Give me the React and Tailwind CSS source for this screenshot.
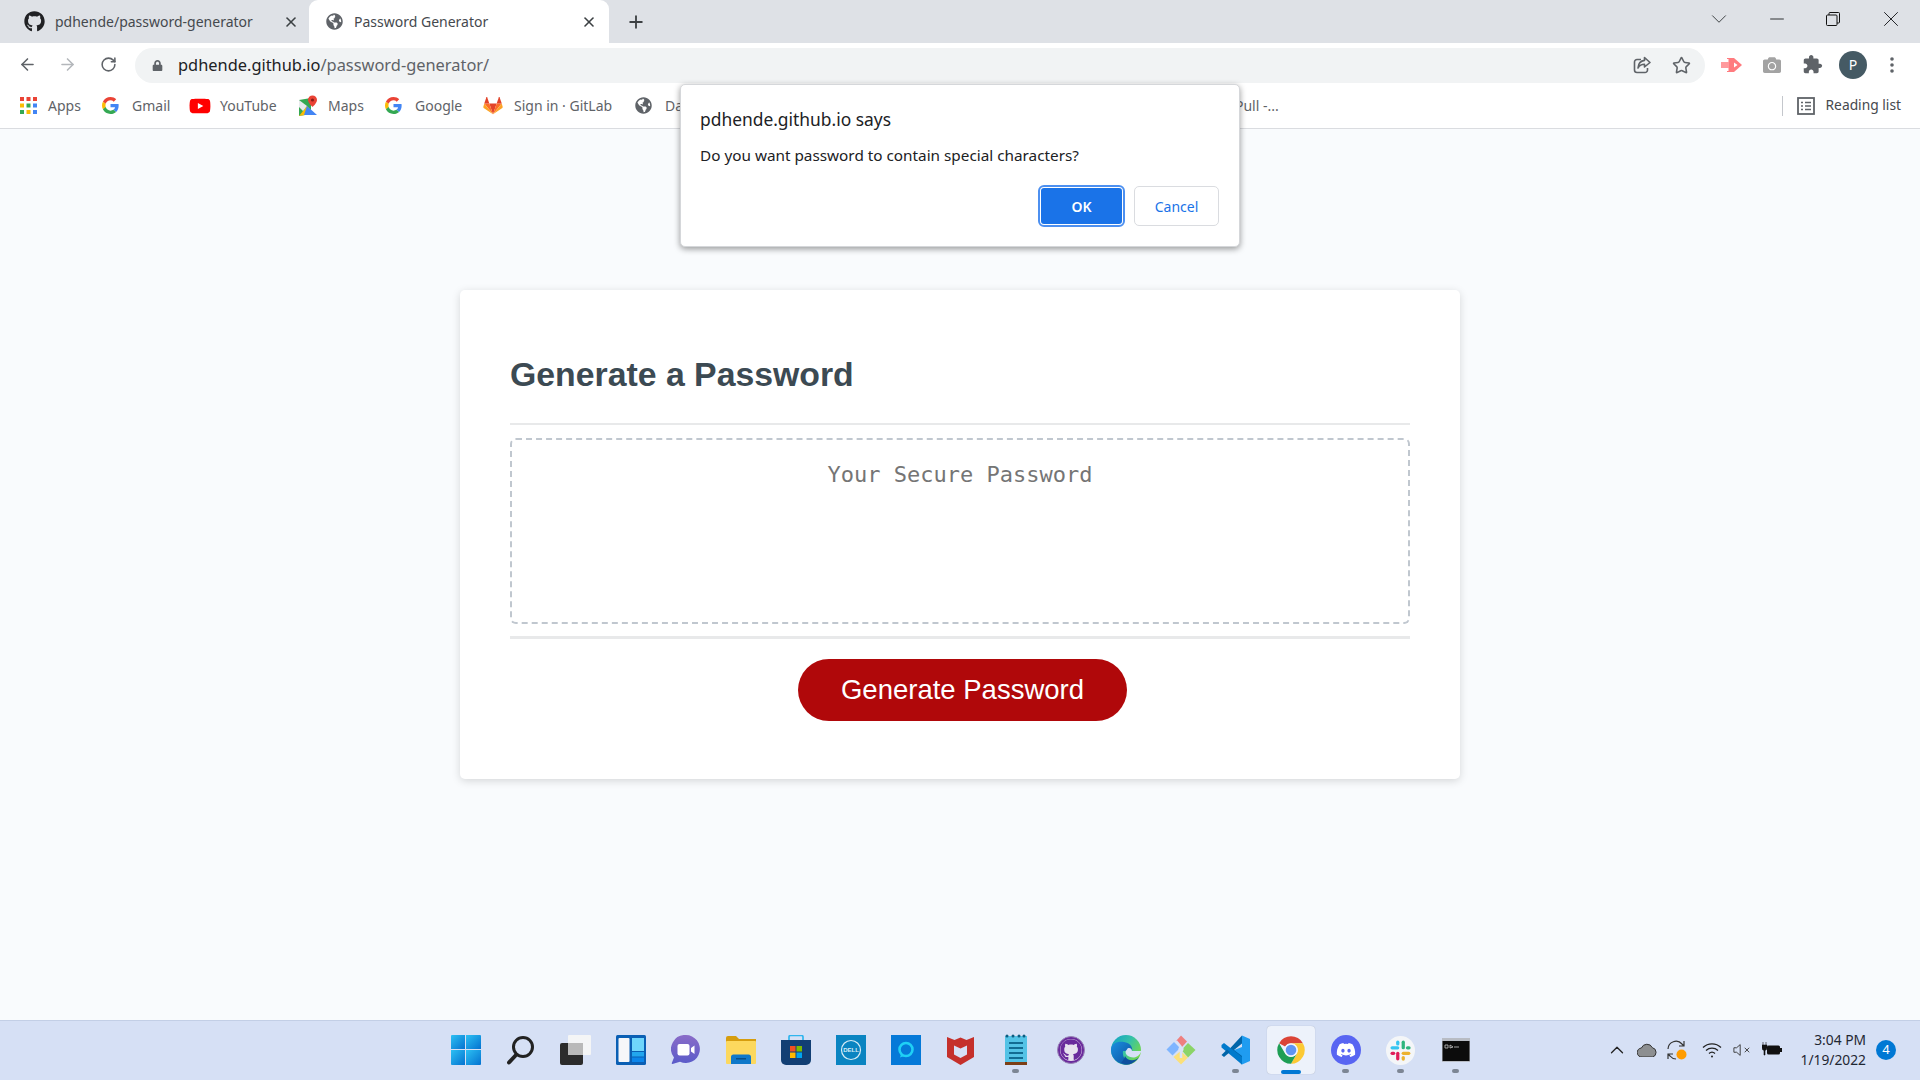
import React from "react";
import { ArrowLeft, ArrowRight, RotateCw, Star, Plus, X, Minus, ChevronDown, ChevronUp } from "lucide-react";
import { FaGithub, FaGlobeAmericas, FaLock, FaCamera, FaDiscord, FaYoutube } from "react-icons/fa";

const ui = "font-['Noto_Sans',sans-serif]";

function GoogleG() {
  return (
    <svg width="17" height="17" viewBox="0 0 48 48">
      <path fill="#EA4335" d="M24 9.5c3.54 0 6.71 1.22 9.21 3.6l6.85-6.85C35.9 2.38 30.47 0 24 0 14.62 0 6.51 5.38 2.56 13.22l7.98 6.19C12.43 13.72 17.74 9.5 24 9.5z" />
      <path fill="#4285F4" d="M46.98 24.55c0-1.57-.15-3.09-.38-4.55H24v9.02h12.94c-.58 2.96-2.26 5.48-4.78 7.18l7.73 6c4.51-4.18 7.09-10.36 7.09-17.65z" />
      <path fill="#FBBC05" d="M10.53 28.59c-.48-1.45-.76-2.99-.76-4.59s.27-3.14.76-4.59l-7.98-6.19C.92 16.46 0 20.12 0 24c0 3.88.92 7.54 2.56 10.78l7.97-6.19z" />
      <path fill="#34A853" d="M24 48c6.48 0 11.93-2.13 15.89-5.81l-7.73-6c-2.15 1.45-4.92 2.3-8.16 2.3-6.26 0-11.57-4.22-13.47-9.91l-7.98 6.19C6.51 42.62 14.62 48 24 48z" />
    </svg>
  );
}

function AppsGrid() {
  const c = ["#ea4335", "#ea4335", "#ea4335", "#fbbc05", "#34a853", "#4285f4", "#34a853", "#fbbc05", "#4285f4"];
  return (
    <svg width="17" height="17" viewBox="0 0 17 17">
      {c.map((f, i) => (
        <rect key={i} x={(i % 3) * 6.5} y={Math.floor(i / 3) * 6.5} width="4" height="4" fill={f} />
      ))}
    </svg>
  );
}

function MapsIcon() {
  return (
    <svg width="20" height="22" viewBox="0 0 20 22">
      <path d="M1 5 L13 3 V19 L1 21Z" fill="#34a853" />
      <path d="M1 21 L9 11 L13 15 V19Z" fill="#fbbc05" />
      <path d="M1 5 L9 11 L5 16 L1 12Z" fill="#e8eaed" />
      <path d="M9 11 L19 20 H6Z" fill="#4285f4" />
      <path d="M14.5 0.5a4.5 4.5 0 0 1 4.5 4.5c0 3-4.5 7-4.5 7S10 8 10 5a4.5 4.5 0 0 1 4.5-4.5z" fill="#ea4335" />
      <circle cx="14.5" cy="5" r="1.6" fill="#8c1d18" />
    </svg>
  );
}

function GitLabIcon() {
  return (
    <svg width="20" height="20" viewBox="0 0 24 24">
      <path d="M12 22 L7.6 9 H16.4Z" fill="#e24329" />
      <path d="M12 22 L7.6 9 H1.5Z" fill="#fc6d26" />
      <path d="M12 22 L16.4 9 H22.5Z" fill="#fc6d26" />
      <path d="M1.5 9 L0.4 13 c-.2.5 0 1 .4 1.3 L12 22Z" fill="#fca326" />
      <path d="M22.5 9 L23.6 13 c.2.5 0 1-.4 1.3 L12 22Z" fill="#fca326" />
      <path d="M1.5 9 H7.6 L5 1.5 c-.2-.4-.7-.4-.9 0Z" fill="#e24329" />
      <path d="M22.5 9 H16.4 L19 1.5 c.2-.4.7-.4.9 0Z" fill="#e24329" />
    </svg>
  );
}

function Bookmark({ width, icon, label, gap }) {
  return (
    <div className="flex items-center shrink-0" style={{ width }}>
      <div className="flex items-center justify-start shrink-0" style={{ width: gap }}>{icon}</div>
      <span className="text-[14px] text-[#5f6368] whitespace-nowrap">{label}</span>
    </div>
  );
}

function Share() {
  return (
    <svg width="20" height="20" viewBox="0 0 20 20" fill="none" stroke="#5f6368" strokeWidth="1.6">
      <path d="M9 4.5H5a2.5 2.5 0 0 0-2.5 2.5v8A2.5 2.5 0 0 0 5 17.5h8a2.5 2.5 0 0 0 2.5-2.5v-2" />
      <path d="M12.5 2.5 L18 7.5 L12.5 12 V9.3 C9.5 9.3 7.5 10.5 6 13 C6.3 9 8.5 5.8 12.5 5.4Z" strokeLinejoin="round" />
    </svg>
  );
}

function RedExt() {
  return (
    <svg width="22" height="16" viewBox="0 0 22 16">
      <path d="M6 1 H13 L21 8 L13 15 H6Z" fill="#ff7b7f" />
      <rect x="0" y="5" width="8" height="6" fill="#ff9a9d" />
      <path d="M13 5.5 L16.5 8 L13 10.5Z" fill="#fff" />
      <rect x="6" y="2" width="1.5" height="3" fill="#fff" />
      <rect x="6" y="11" width="1.5" height="3" fill="#fff" />
    </svg>
  );
}

function ReadingList() {
  return (
    <svg width="18" height="18" viewBox="0 0 18 18" fill="none" stroke="#5f6368">
      <rect x="1" y="1" width="16" height="16" strokeWidth="1.8" />
      <path d="M4 5.5h2M8 5.5h6M4 9h2M8 9h6M4 12.5h2M8 12.5h6" strokeWidth="1.6" />
    </svg>
  );
}

function Slot({ dot, active, children }) {
  return (
    <div className="relative w-[55px] h-[48px] flex items-center justify-center shrink-0">
      {active && <div className="absolute left-[4px] top-0 w-[48px] h-[48px] rounded-[4px] bg-[#edf2fb] shadow-[0_0_1px_rgba(0,0,0,0.25)]" />}
      <div className="relative flex items-center justify-center">{children}</div>
      {dot && <div className="absolute left-[24px] bottom-[1px] w-[7px] h-[4px] rounded-full bg-[#7d8694]" />}
      {active && <div className="absolute left-[18px] bottom-0 w-[20px] h-[4px] rounded-full bg-[#0078d4]" />}
    </div>
  );
}

const IWin = () => (
  <svg width="30" height="30" viewBox="0 0 30 30">
    <defs>
      <linearGradient id="w" x1="0" y1="0" x2="1" y2="1"><stop offset="0" stopColor="#2cc0f3" /><stop offset="1" stopColor="#0472d0" /></linearGradient>
    </defs>
    <path d="M1 0h13v14H0V1a1 1 0 0 1 1-1z" fill="url(#w)" />
    <path d="M15 0h14a1 1 0 0 1 1 1v13H15z" fill="url(#w)" />
    <path d="M0 15h14v15H1a1 1 0 0 1-1-1z" fill="url(#w)" />
    <path d="M15 15h15v14a1 1 0 0 1-1 1H15z" fill="url(#w)" />
  </svg>
);
const ISearch = () => (
  <svg width="28" height="30" viewBox="0 0 28 30" fill="none">
    <circle cx="16" cy="12" r="9.5" stroke="#222" strokeWidth="3" />
    <path d="M9 20 L2 27.5" stroke="#222" strokeWidth="4" strokeLinecap="round" />
  </svg>
);
const ITask = () => (
  <svg width="32" height="30" viewBox="0 0 32 30">
    <rect x="0" y="8" width="23" height="22" rx="2" fill="#2b2b2b" />
    <rect x="8" y="0" width="23" height="20" rx="1" fill="#f5f5f5" fillOpacity="0.95" />
    <rect x="8" y="8" width="15" height="12" fill="#b9b9b9" />
  </svg>
);
const IWidgets = () => (
  <svg width="30" height="30" viewBox="0 0 30 30">
    <rect width="30" height="30" rx="1.5" fill="#0a5fb4" />
    <rect x="2.5" y="3" width="11" height="24" rx="1" fill="#f6f7f9" />
    <rect x="16" y="3" width="12" height="13" fill="#6fd6fb" />
    <rect x="16" y="17" width="12" height="4.5" fill="#22a6ee" />
    <rect x="16" y="22.5" width="12" height="4.5" fill="#0b85ea" />
  </svg>
);
const IChat = () => (
  <svg width="30" height="30" viewBox="0 0 30 30">
    <defs>
      <linearGradient id="c" x1="0" y1="0" x2="0" y2="1"><stop offset="0" stopColor="#8a6cc8" /><stop offset="1" stopColor="#5a5bc9" /></linearGradient>
    </defs>
    <path d="M15 0a14 14 0 1 1-6 26.7L1.5 29c-.8 0-1-.6-.6-1.3L3 22.5A14 14 0 0 1 15 0z" fill="url(#c)" />
    <rect x="6.5" y="9" width="12" height="11.5" rx="2" fill="#fff" />
    <path d="M20 13 L23.5 10.5 V19 L20 16.5Z" fill="#fff" />
  </svg>
);
const IFolder = () => (
  <svg width="30" height="28" viewBox="0 0 30 28">
    <path d="M0 2a2 2 0 0 1 2-2h8l3 3h-13z" fill="#d69d0e" />
    <rect x="0" y="3" width="30" height="5" fill="#d69d0e" />
    <rect x="0" y="5" width="30" height="23" rx="1" fill="#fcd85e" />
    <path d="M5 28v-7a2.5 2.5 0 0 1 2.5-2.5h15A2.5 2.5 0 0 1 25 21v7z" fill="#0f78c9" />
    <rect x="10" y="22" width="10" height="1.5" fill="#074e88" />
  </svg>
);
const IStore = () => (
  <svg width="30" height="30" viewBox="0 0 30 30">
    <path d="M8 5V2a1.5 1.5 0 0 1 1.5-1.5h11A1.5 1.5 0 0 1 22 2v3" stroke="#30b5ee" strokeWidth="1.7" fill="none" />
    <path d="M0 5h30v20a5 5 0 0 1-5 5H5a5 5 0 0 1-5-5z" fill="#123f74" />
    <rect x="9" y="11" width="5.5" height="5.5" fill="#f25022" />
    <rect x="15.5" y="11" width="5.5" height="5.5" fill="#7fba00" />
    <rect x="9" y="17.5" width="5.5" height="5.5" fill="#ffb900" />
    <rect x="15.5" y="17.5" width="5.5" height="5.5" fill="#00a4ef" />
  </svg>
);
const IDell = () => (
  <svg width="30" height="30" viewBox="0 0 30 30">
    <rect width="30" height="30" fill="#0a84c1" />
    <circle cx="15" cy="15" r="9.5" fill="none" stroke="#d8ecf6" strokeWidth="1.2" />
    <text x="15" y="17" fontSize="6" fontWeight="700" textAnchor="middle" fill="#d8ecf6" fontFamily="Liberation Sans, sans-serif">DELL</text>
  </svg>
);
const IAlexa = () => (
  <svg width="30" height="30" viewBox="0 0 30 30">
    <rect width="30" height="30" fill="#0579d8" />
    <circle cx="15" cy="14.5" r="6.5" fill="none" stroke="#1fd0f5" strokeWidth="2.6" />
    <path d="M10 19.5 L9 22.5 L13 21" fill="#1fd0f5" />
  </svg>
);
const IMcAfee = () => (
  <svg width="27" height="30" viewBox="0 0 27 30">
    <path d="M0 2 L7.5 5 L13.5 2.5 L19.5 5 L27 2 V22 L13.5 30 L0 22Z" fill="#c5302b" />
    <path d="M7 10.5 L13.5 13.5 L20 10.5 V19.5 L13.5 23 L7 19.5Z" fill="#d6e0f5" />
  </svg>
);
const INotes = () => (
  <svg width="22" height="32" viewBox="0 0 22 32">
    <rect x="0" y="2" width="22" height="26" fill="#54c3e6" />
    <rect x="0" y="28" width="22" height="3" fill="#7c3f16" />
    {[2, 8, 14, 19].map((x) => <circle key={x} cx={x} cy="2" r="1.5" fill="#0e5c80" />)}
    {[8, 13, 18, 23].map((y) => <rect key={y} x="4" y={y} width="14" height="2" fill="#136c93" />)}
  </svg>
);
const IGithub = () => (
  <div className="w-[28px] h-[28px] rounded-full bg-[#6a2a9c] border-[1px] border-[#9a86b8] flex items-center justify-center">
    <div className="w-[22px] h-[22px] rounded-full bg-[#e8e2ef] flex items-center justify-center">
      <FaGithub size={22} color="#6a2a9c" />
    </div>
  </div>
);
const IEdge = () => (
  <svg width="30" height="30" viewBox="0 0 30 30">
    <defs>
      <linearGradient id="e1" x1="0" y1="0" x2="1" y2="0.6"><stop offset="0" stopColor="#0fa0c8" /><stop offset="0.55" stopColor="#35c1a8" /><stop offset="1" stopColor="#74d84a" /></linearGradient>
      <linearGradient id="e2" x1="0" y1="0" x2="1" y2="1"><stop offset="0" stopColor="#1a8fe0" /><stop offset="1" stopColor="#0d4f9e" /></linearGradient>
    </defs>
    <circle cx="15" cy="15" r="15" fill="url(#e1)" />
    <path d="M0 15 C0 8 7 6 13 7 C19 8 22 12 21 16 H12 C11 22 15 28 21 28.5 A15 15 0 0 1 0 15z" fill="url(#e2)" />
    <path d="M30 17 C27 24 20 23 17 21 C14 19 14 16 16 14.5 C17 12 21 13 21 16 L30 16Z" fill="#d6e0f5" />
    <path d="M14 21 C16 26 24 27 28 22 C24 29 16 31 10 27.5 C12 26.5 13 24 14 21z" fill="#0d4f9e" />
  </svg>
);
const IGit = () => (
  <svg width="30" height="30" viewBox="0 0 30 30">
    <path d="M15 0.5 L21 6.5 L16 12 L10 6Z" fill="#ee7f7f" />
    <path d="M0.5 15 L8 7.5 L14 13.5 L6.5 21Z" fill="#7fb5ff" transform="translate(0 -0.5)" />
    <path d="M22 8 L29.5 15 L22 22.5 L15.5 15Z" fill="#8bd468" />
    <path d="M15 29.5 L7.5 22 L14.5 16 L22 22.5Z" fill="#fbe07a" />
    <path d="M10 6 L15 12 M15 15v8" stroke="#d9e2f6" strokeWidth="2.5" />
    <circle cx="15" cy="14" r="2.6" fill="#d9e2f6" />
  </svg>
);
const IVscode = () => (
  <svg width="30" height="30" viewBox="0 0 30 30">
    <path d="M21 0.5 L29 4 V26 L21 29.5 L8 17 L21 12Z" fill="#1f9cf0" />
    <path d="M21 0.5 L7.5 15 L21 29.5 V21 L13 15 L21 8.5Z" fill="#0065a9" />
    <path d="M0.5 10 L3 8 L21 22 V29.5 L0.5 12.5Z" fill="#007acc" />
    <path d="M0.5 20 L3 22 L9 17 L6 14.5Z" fill="#0065a9" />
  </svg>
);
const IChrome = () => (
  <svg width="30" height="30" viewBox="0 0 48 48">
    <path d="M4.95 13 A22 22 0 0 1 43.05 13 L24 13 A11 11 0 0 0 14.5 18.5Z" fill="#db4437" />
    <path d="M43.05 13 A22 22 0 0 1 24 46 L33.5 29.5 A11 11 0 0 0 33.5 18.5 A11 11 0 0 0 24 13Z" fill="#fcc934" />
    <path d="M24 46 A22 22 0 0 1 4.95 13 L14.5 29.5 A11 11 0 0 0 24 35 A11 11 0 0 0 33.5 29.5Z" fill="#1e9e55" />
    <circle cx="24" cy="24" r="10.5" fill="#f3f5fb" />
    <circle cx="24" cy="24" r="8.5" fill="#5f94f2" />
  </svg>
);
const IDiscord = () => (
  <div className="w-[30px] h-[30px] rounded-full bg-[#5865f2] flex items-center justify-center">
    <FaDiscord size={20} color="#fff" />
  </div>
);
const ISlack = () => (
  <svg width="29" height="29" viewBox="0 0 29 29">
    <circle cx="14.5" cy="14.5" r="14.5" fill="#f4f6f8" />
    <g transform="translate(14.5 14.5) scale(1.25) translate(-14.5 -14.5)">
      <rect x="6.5" y="11" width="7" height="2.6" rx="1.3" fill="#36c5f0" />
      <rect x="11" y="6.5" width="2.6" height="4" rx="1.3" fill="#36c5f0" />
      <rect x="15.4" y="6.5" width="2.6" height="7" rx="1.3" fill="#2eb67d" />
      <rect x="18.8" y="11" width="3.8" height="2.6" rx="1.3" fill="#2eb67d" />
      <rect x="15.4" y="15.4" width="7" height="2.6" rx="1.3" fill="#ecb22e" />
      <rect x="15.4" y="18.8" width="2.6" height="3.8" rx="1.3" fill="#ecb22e" />
      <rect x="11" y="15.4" width="2.6" height="7" rx="1.3" fill="#e01e5a" />
      <rect x="6.5" y="15.4" width="3.8" height="2.6" rx="1.3" fill="#e01e5a" />
    </g>
  </svg>
);
const ITerminal = () => (
  <svg width="28" height="24" viewBox="0 0 28 24">
    <rect width="28" height="24" fill="#b8bcc4" />
    <rect y="3" x="0.5" width="27" height="20" fill="#0c0c0c" />
    <path d="M3 7h3v3H3zM8 7l3 2-3 1zM12 9h5" stroke="#c8c8c8" strokeWidth="0.8" fill="none" />
  </svg>
);

function Tray({ w, children }) {
  return <div className="flex items-center justify-center shrink-0" style={{ width: w }}>{children}</div>;
}

export default function App() {
  return (
    <div className={`relative h-screen w-full flex flex-col overflow-hidden bg-[#f9fbfd] ${ui}`}>
      {/* tab strip */}
      <div className="h-[43px] shrink-0 bg-[#dee1e6] flex items-center">
        <div className="w-[309px] h-full flex items-center pl-[24px] shrink-0">
          <FaGithub size={21} color="#202124" />
          <span className="ml-[10px] text-[14px] text-[#45494e] whitespace-nowrap w-[226px]">pdhende/password-generator</span>
          <X size={16} color="#3c4043" strokeWidth={2.4} className="ml-[2px]" />
        </div>
        <div className="w-[300px] h-full bg-white rounded-t-[9px] flex items-center pl-[17px] shrink-0">
          <FaGlobeAmericas size={17} color="#5f6368" />
          <span className="ml-[11px] text-[14px] text-[#45494e] whitespace-nowrap w-[227px]">Password Generator</span>
          <X size={16} color="#3c4043" strokeWidth={2.4} />
        </div>
        <Plus size={20} color="#3c4043" strokeWidth={2.2} className="ml-[17px]" />
        <div className="ml-auto flex items-center mb-[6px]">
          <ChevronDown size={26} color="#3c4043" strokeWidth={0.9} className="mr-[34px]" />
          <Minus size={22} color="#202124" strokeWidth={1} className="mr-[38px]" />
          <svg width="14" height="14" viewBox="0 0 14 14" fill="none" stroke="#111" className="mr-[38px]">
            <rect x="0.5" y="3" width="10.5" height="10.5" rx="1" />
            <path d="M3 3V1.5a1 1 0 0 1 1-1h8.5a1 1 0 0 1 1 1V10a1 1 0 0 1-1 1H11" />
          </svg>
          <X size={26} color="#202124" strokeWidth={0.9} className="mr-[16px]" />
        </div>
      </div>

      {/* toolbar */}
      <div className="h-[43px] shrink-0 bg-white flex items-center">
        <div className="w-[135px] flex items-center pl-[18px] shrink-0">
          <ArrowLeft size={19} color="#5f6368" strokeWidth={2} />
          <ArrowRight size={19} color="#b4b7bb" strokeWidth={2} className="ml-[21px]" />
          <RotateCw size={17} color="#5f6368" strokeWidth={2.2} className="ml-[23px]" />
        </div>
        <div className="w-[1570px] h-[35px] mt-[1px] rounded-full bg-[#f1f3f4] flex items-center pl-[17px] shrink-0">
          <FaLock size={11} color="#5f6368" />
          <span className="ml-[15px] text-[16.4px] text-[#202124] whitespace-nowrap">
            pdhende.github.io<span className="text-[#5f6368]">/password-generator/</span>
          </span>
          <div className="ml-auto flex items-center">
            <Share />
            <Star size={19} color="#5f6368" strokeWidth={2} className="ml-[20px] mr-[14px]" />
          </div>
        </div>
        <div className="flex items-center shrink-0 ml-[16px]">
          <RedExt />
          <FaCamera size={18} color="#a3a3a3" className="ml-[20px]" />
          <svg width="21" height="21" viewBox="0 0 24 24" fill="#5f6368" className="ml-[21px]">
            <path d="M20.5 11H19V7c0-1.1-.9-2-2-2h-4V3.5C13 2.12 11.88 1 10.5 1S8 2.12 8 3.5V5H4c-1.1 0-1.99.9-1.99 2v3.8H3.5c1.49 0 2.7 1.21 2.7 2.7s-1.21 2.7-2.7 2.7H2V20c0 1.1.9 2 2 2h3.8v-1.5c0-1.49 1.21-2.7 2.7-2.7 1.49 0 2.7 1.21 2.7 2.7V22H17c1.1 0 2-.9 2-2v-4h1.5c1.38 0 2.5-1.12 2.5-2.5S21.88 11 20.5 11z" />
          </svg>
          <div className="ml-[16px] w-[28px] h-[28px] rounded-full bg-[#455a64] text-white text-[14px] flex items-center justify-center">P</div>
          <svg width="4" height="16" viewBox="0 0 4 16" className="ml-[23px]" fill="#5f6368">
            <circle cx="2" cy="2" r="1.8" /><circle cx="2" cy="8" r="1.8" /><circle cx="2" cy="14" r="1.8" />
          </svg>
        </div>
      </div>

      {/* bookmarks */}
      <div className="h-[43px] shrink-0 bg-white border-b border-[#dadce0] flex items-center pl-[20px] pb-[3px]">
        <Bookmark width={82} gap={28} icon={<AppsGrid />} label="Apps" />
        <Bookmark width={87} gap={30} icon={<GoogleG />} label="Gmail" />
        <Bookmark width={109} gap={31} icon={<FaYoutube size={22} color="#ff0000" />} label="YouTube" />
        <Bookmark width={87} gap={30} icon={<MapsIcon />} label="Maps" />
        <Bookmark width={98} gap={30} icon={<GoogleG />} label="Google" />
        <Bookmark width={152} gap={31} icon={<GitLabIcon />} label="Sign in · GitLab" />
        <Bookmark width={60} gap={30} icon={<FaGlobeAmericas size={17} color="#5f6368" />} label="Da" />
        <span className="ml-[540px] text-[14px] text-[#5f6368] whitespace-nowrap">Pull -...</span>
        <div className="ml-auto flex items-center pr-[19px]">
          <div className="w-[1px] h-[20px] bg-[#c4c7cc] mr-[14px]" />
          <ReadingList />
          <span className="ml-[11px] text-[13.8px] text-[#45494e] whitespace-nowrap">Reading list</span>
        </div>
      </div>

      {/* page */}
      <main className="flex-1 min-h-0 pt-[161px]">
        <div className="mx-auto w-[1000px] h-[489px] bg-white rounded-[5px] shadow-[0_2px_8px_rgba(0,0,0,0.15)] px-[50px] text-[#3c4a53]">
          <div className="h-[135px] border-b-2 border-[#e8e9ea] flex items-center pt-[36px]">
            <h1 className="font-['Liberation_Sans',sans-serif] font-bold text-[33.8px] leading-none">Generate a Password</h1>
          </div>
          <div className="mt-[13px] h-[186px] border-2 border-dashed border-[#c0c7cf] rounded-[6px] text-center pt-[20px] font-['DejaVu_Sans_Mono',monospace] text-[22px] leading-[29px] text-[#757575]">
            Your Secure Password
          </div>
          <div className="mt-[12px] h-[3px] bg-[#e8e9ea]" />
          <div className="mt-[20px] flex justify-center">
            <button className="ml-[5px] w-[329px] h-[62px] rounded-full bg-[#b0080a] text-white font-['Liberation_Sans',sans-serif] text-[27.5px]">
              Generate Password
            </button>
          </div>
        </div>
      </main>

      {/* taskbar */}
      <div className="h-[60px] shrink-0 bg-[#d6e0f5] border-t border-[#c3cfe6] flex items-end pb-[6px] relative">
        <div className="flex ml-[438px]">
          <Slot><IWin /></Slot>
          <Slot><ISearch /></Slot>
          <Slot><ITask /></Slot>
          <Slot><IWidgets /></Slot>
          <Slot><IChat /></Slot>
          <Slot><IFolder /></Slot>
          <Slot><IStore /></Slot>
          <Slot><IDell /></Slot>
          <Slot><IAlexa /></Slot>
          <Slot><IMcAfee /></Slot>
          <Slot dot><INotes /></Slot>
          <Slot><IGithub /></Slot>
          <Slot><IEdge /></Slot>
          <Slot><IGit /></Slot>
          <Slot dot><IVscode /></Slot>
          <Slot active><IChrome /></Slot>
          <Slot dot><IDiscord /></Slot>
          <Slot dot><ISlack /></Slot>
          <Slot dot><ITerminal /></Slot>
        </div>
        <div className="ml-[120px] h-[48px] flex items-center shrink-0">
          <Tray w={28}><ChevronUp size={22} color="#222" strokeWidth={1.4} /></Tray>
          <Tray w={32}>
            <svg width="20" height="14" viewBox="0 0 20 14">
              <path d="M5 14a4.5 4.5 0 0 1-.6-9 6 6 0 0 1 11-.3A4.8 4.8 0 0 1 15.5 14z" fill="#8d8f91" stroke="#333" strokeWidth="1" />
            </svg>
          </Tray>
          <Tray w={28}>
            <svg width="22" height="22" viewBox="0 0 22 22" fill="none" stroke="#333" strokeWidth="1.2">
              <path d="M2 10a8 8 0 0 1 14-5l2 2M18 2v5h-5" />
              <path d="M2 15l2 2a8 8 0 0 0 6 3M2 20v-5h5" />
              <circle cx="15.5" cy="15.5" r="5" fill="#ff9c00" stroke="none" />
            </svg>
          </Tray>
          <Tray w={42}>
            <svg width="20" height="16" viewBox="0 0 20 16" fill="none" stroke="#222" strokeWidth="1.3">
              <path d="M1 5.5a13 13 0 0 1 18 0M4 8.5a9 9 0 0 1 12 0M7 11.5a4.5 4.5 0 0 1 6 0" />
              <circle cx="10" cy="14.5" r="1" fill="#222" stroke="none" />
            </svg>
          </Tray>
          <Tray w={18}>
            <svg width="20" height="14" viewBox="0 0 20 14" fill="none" stroke="#333" strokeWidth="1">
              <path d="M1 4.5h3L8 1v12L4 9.5H1z" />
              <path d="M13 4.5l5 5M18 4.5l-5 5" />
            </svg>
          </Tray>
          <Tray w={42}>
            <svg width="20" height="16" viewBox="0 0 20 16" fill="#111">
              <rect x="5" y="3.5" width="13" height="9" rx="1.5" />
              <rect x="18" y="6" width="2" height="4" />
              <path d="M1 0v3M4 0v3M0 3h5v3a2.5 2.5 0 0 1-2 2.4V13H2V8.4A2.5 2.5 0 0 1 0 6z" stroke="#111" strokeWidth="0.6" />
            </svg>
          </Tray>
          <div className="w-[64px] ml-[9px] text-right text-[13.8px] leading-[20px] text-[#1f2733] shrink-0 whitespace-nowrap flex flex-col items-end">
            <span>3:04 PM</span>
            <span>1/19/2022</span>
          </div>
          <div className="ml-[10px] w-[20px] h-[20px] rounded-full bg-[#0078d4] text-white text-[13px] flex items-center justify-center shrink-0">4</div>
        </div>
      </div>

      {/* JS dialog */}
      <div className="absolute left-[680px] top-[84px] w-[560px] h-[163px] bg-white rounded-[5px] border border-[#d5d7da] shadow-[0_2px_6px_rgba(0,0,0,0.4)] px-[20px]">
        <div className="pt-[22px] text-[17.4px] leading-[24px] text-[#202124] -ml-[1px]">pdhende.github.io says</div>
        <div className="mt-[14px] text-[15.3px] leading-[20px] text-[#202124] -ml-[1px]">Do you want password to contain special characters?</div>
        <div className="mt-[21px] flex justify-end gap-[10px]">
          <button className="w-[85px] h-[40px] rounded-[5px] bg-[#1a73e8] border-2 border-white outline-2 outline-[#4d90f0] -outline-offset-1 text-white text-[14px] font-semibold">OK</button>
          <button className="w-[85px] h-[40px] rounded-[5px] bg-white border border-[#dadce0] text-[#1a73e8] text-[14px]">Cancel</button>
        </div>
      </div>
    </div>
  );
}
